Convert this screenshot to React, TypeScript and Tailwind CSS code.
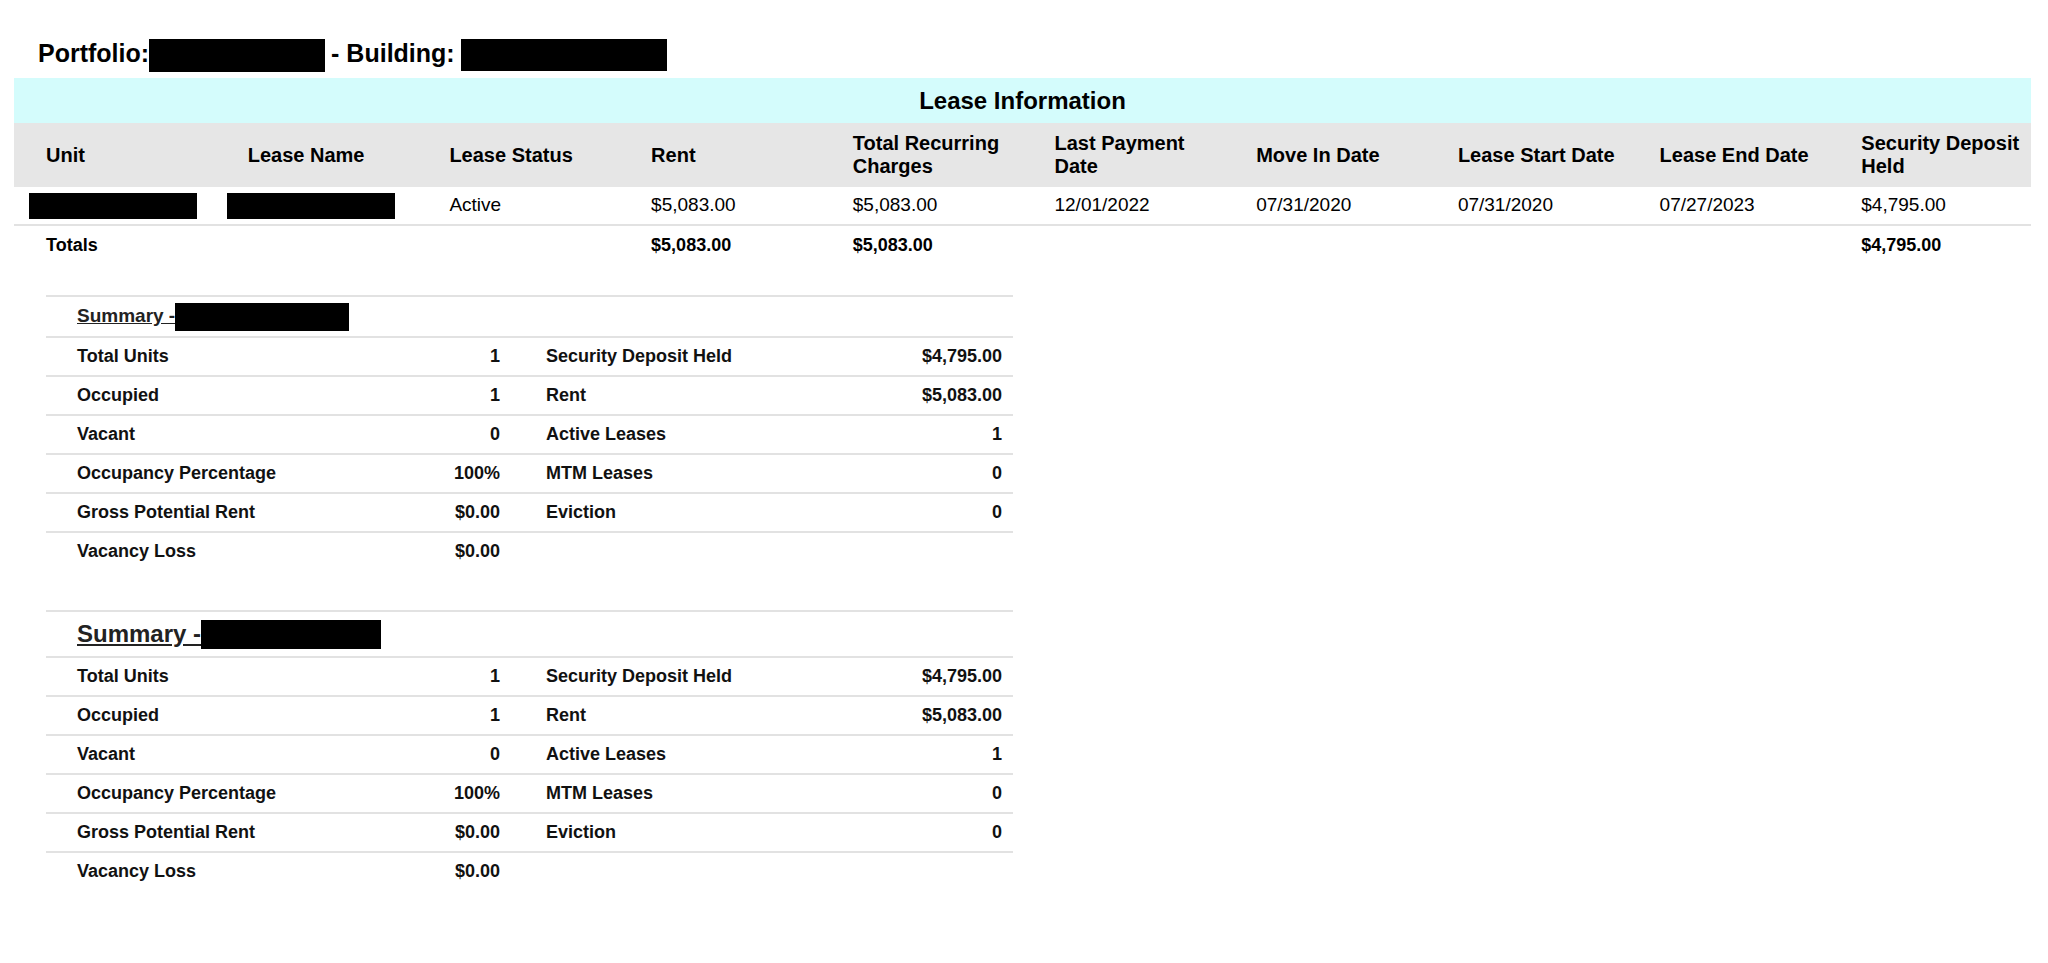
import React from "react";

const Redact = ({ w, h }: { w: number; h: number }) => (
  <span className="inline-block bg-black align-middle" style={{ width: w, height: h }} />
);

const cols = [
  "Unit",
  "Lease Name",
  "Lease Status",
  "Rent",
  "Total Recurring Charges",
  "Last Payment Date",
  "Move In Date",
  "Lease Start Date",
  "Lease End Date",
  "Security Deposit Held",
];

const dataRow: (string | null)[] = [null, null, "Active", "$5,083.00", "$5,083.00", "12/01/2022", "07/31/2020", "07/31/2020", "07/27/2023", "$4,795.00"];
const totalsRow = ["Totals", "", "", "$5,083.00", "$5,083.00", "", "", "", "", "$4,795.00"];

const rows: [string, string, string, string][] = [
  ["Total Units", "1", "Security Deposit Held", "$4,795.00"],
  ["Occupied", "1", "Rent", "$5,083.00"],
  ["Vacant", "0", "Active Leases", "1"],
  ["Occupancy Percentage", "100%", "MTM Leases", "0"],
  ["Gross Potential Rent", "$0.00", "Eviction", "0"],
  ["Vacancy Loss", "$0.00", "", ""],
];

function Summary({ big }: { big: boolean }) {
  return (
    <div className="ml-[46px] w-[967px] text-[18px] font-bold text-[#111]">
      <div className={`border-t-2 border-[#e2e2e2] pl-[31px] flex items-center ${big ? "h-[46px]" : "h-[41px]"}`}>
        <span className={`underline ${big ? "text-[24px]" : "text-[19px]"} text-[#222]`}>Summary -</span>
        {big ? <Redact w={180} h={29} /> : <Redact w={174} h={28} />}
      </div>
      {rows.map((r, i) => (
        <div key={i} className="h-[39px] border-t-2 border-[#e2e2e2] pl-[31px] pr-[11px] flex items-center">
          <span className="w-[363px]">{r[0]}</span>
          <span className="w-[60px] text-right">{r[1]}</span>
          <span className="ml-[46px] flex-1">{r[2]}</span>
          <span className="text-right">{r[3]}</span>
        </div>
      ))}
    </div>
  );
}

export default function App() {
  return (
    <div className="w-[2048px] h-[963px] bg-white text-black" style={{ fontFamily: '"Liberation Sans", Arial, sans-serif' }}>
      <div className="h-[78px] flex items-end pl-[38px] pb-[6px] text-[25px] font-bold">
        <span>Portfolio:</span>
        <Redact w={176} h={33} />
        <span className="ml-[6px]">- Building:</span>
        <span className="ml-[6px]"><Redact w={206} h={32} /></span>
      </div>
      <div className="mx-[14px] w-[2017px]">
        <div className="h-[45px] bg-[#d4fcfc] flex items-center justify-center text-[24px] font-bold">Lease Information</div>
        <div className="h-[64px] bg-[#e6e6e6] grid grid-cols-10 items-center text-[20px] font-bold leading-[23px]">
          {cols.map((c) => (
            <div key={c} className="pl-[32px] pr-[4px]">{c}</div>
          ))}
        </div>
        <div className="h-[39px] grid grid-cols-10 items-center text-[19px] border-b-2 border-[#e2e2e2]">
          {dataRow.map((c, i) => (
            <div key={i} className={c === null ? "pl-[15px]" : "pl-[32px]"}>
              {c === null ? (i === 0 ? <Redact w={168} h={26} /> : <span className="ml-[-4px]"><Redact w={168} h={26} /></span>) : c}
            </div>
          ))}
        </div>
        <div className="h-[39px] grid grid-cols-10 items-center text-[18px] font-bold">
          {totalsRow.map((c, i) => (
            <div key={i} className="pl-[32px]">{c}</div>
          ))}
        </div>
      </div>
      <div className="h-[30px]" />
      <Summary big={false} />
      <div className="h-[40px]" />
      <Summary big={true} />
    </div>
  );
}
